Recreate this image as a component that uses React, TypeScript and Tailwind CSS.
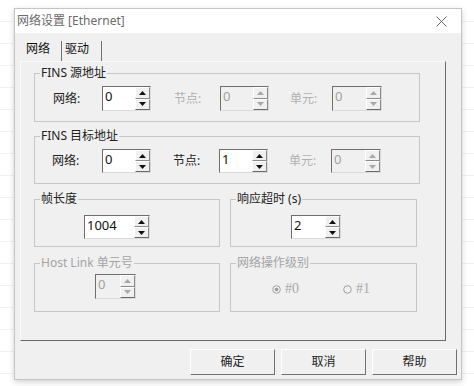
import React from "react";

const FONT = "font-['Noto_Sans','Noto_Sans_CJK_SC',sans-serif]";

interface SpinProps {
  value: string;
  w: string;
  h?: string;
  disabled?: boolean;
}

const Arrow: React.FC<{ up?: boolean; disabled?: boolean }> = ({ up, disabled }) => (
  <svg width="7" height="4" viewBox="0 0 7 4">
    <path
      d={up ? "M0 4 L3.5 0 L7 4 Z" : "M0 0 L3.5 4 L7 0 Z"}
      fill={disabled ? "#a8a8a8" : "#111"}
    />
  </svg>
);

const Spin: React.FC<SpinProps> = ({ value, w, h = "h-[25px]", disabled }) => (
  <div
    className={`flex ${w} ${h} border border-t-[#6e6e6e] border-l-[#6e6e6e] border-r-[#dadada] border-b-[#dadada]`}
  >
    <div
      className={`flex-1 pl-[2px] pt-[1px] text-[13px] leading-[16px] ${
        disabled ? "bg-[#f0f0f0] text-[#a0a0a0]" : "bg-white text-[#111]"
      }`}
    >
      {value}
    </div>
    <div className="flex w-[15px] flex-col bg-[#f0f0f0]">
      <div className="flex flex-1 items-center justify-center border border-t-white border-l-white border-r-[#8a8a8a] border-b-[#8a8a8a]">
        <Arrow up disabled={disabled} />
      </div>
      <div className="flex flex-1 items-center justify-center border border-t-white border-l-white border-r-[#8a8a8a] border-b-[#6a6a6a]">
        <Arrow disabled={disabled} />
      </div>
    </div>
  </div>
);

const Legend: React.FC<{ text: string; disabled?: boolean }> = ({ text, disabled }) => (
  <div
    className={`-mt-[9px] ml-[5px] w-fit bg-[#f0f0f0] px-[1px] text-[12px] leading-[16px] ${
      disabled ? "text-[#a4a4a4]" : "text-[#222]"
    }`}
  >
    {text}
  </div>
);

const Label: React.FC<{ text: string; w: string; ml?: string; disabled?: boolean }> = ({
  text,
  w,
  ml = "",
  disabled,
}) => (
  <div
    className={`${w} ${ml} text-[12px] leading-[16px] ${
      disabled ? "text-[#b0b0b0]" : "text-[#222]"
    }`}
  >
    {text}
  </div>
);

const Radio: React.FC<{ checked?: boolean; text: string }> = ({ checked, text }) => (
  <div className="flex items-center gap-[4px] text-[14px] leading-[16px] text-[#a8a8a8]">
    <svg width="9" height="9" viewBox="0 0 9 9">
      <circle cx="4.5" cy="4.5" r="3.8" fill="none" stroke="#a0a0a0" strokeWidth="1" />
      {checked && <circle cx="4.5" cy="4.5" r="1.8" fill="#9a9a9a" />}
    </svg>
    <span className="font-['Liberation_Serif',serif]">{text}</span>
  </div>
);

const Btn: React.FC<{ text: string }> = ({ text }) => (
  <div className="flex h-[26px] w-[85px] items-center justify-center border border-t-white border-l-white border-r-[#707070] border-b-[#707070] bg-[#f0f0f0] text-[12px] text-[#222]">
    {text}
  </div>
);

export default function App() {
  return (
    <div
      className={`h-[386px] w-[474px] overflow-hidden bg-white bg-[repeating-linear-gradient(to_bottom,#ffffff_0px,#ffffff_21px,#f1f1f1_21px,#f1f1f1_22px)] pl-[14px] pt-[8px] ${FONT}`}
    >
      <div className="flex h-[372px] w-[448px] flex-col border border-[#c4c4c4] bg-[#f0f0f0] shadow-[0_2px_6px_rgba(0,0,0,0.18)]">
        {/* title bar */}
        <div className="flex h-[24px] items-center justify-between bg-white pl-[2px] pr-[14px]">
          <span className="text-[12px] text-[#6a6a6a]">网络设置 [Ethernet]</span>
          <svg width="11" height="11" viewBox="0 0 11 11">
            <path d="M0.5 0.5 L10.5 10.5 M10.5 0.5 L0.5 10.5" stroke="#666" strokeWidth="1" />
          </svg>
        </div>

        {/* tabs */}
        <div className="mt-[8px] flex h-[20px] pl-[7px]">
          <div className="w-[40px] border-r border-[#707070] pl-[4px] text-[12px] leading-[16px] text-[#111]">
            网络
          </div>
          <div className="w-[40px] border-r border-[#707070] pl-[3px] text-[12px] leading-[16px] text-[#111]">
            驱动
          </div>
        </div>

        {/* tab panel */}
        <div className="ml-[5px] flex h-[280px] w-[426px] flex-col border border-t-[#fafafa] border-l-[#fafafa] border-r-[#6a6a6a] border-b-[#6a6a6a] pl-[13px]">
          <div className="mt-[11px] flex h-[49px] w-[386px] flex-col border border-[#c6c6c6]">
            <Legend text="FINS 源地址" />
            <div className="mt-[5px] flex items-center pl-[18px]">
              <Label text="网络:" w="w-[49px]" />
              <Spin value="0" w="w-[49px]" />
              <Label text="节点:" w="w-[46px]" ml="ml-[23px]" disabled />
              <Spin value="0" w="w-[49px]" disabled />
              <Label text="单元:" w="w-[42px]" ml="ml-[21px]" disabled />
              <Spin value="0" w="w-[50px]" disabled />
            </div>
          </div>

          <div className="mt-[14px] flex h-[48px] w-[386px] flex-col border border-[#c6c6c6]">
            <Legend text="FINS 目标地址" />
            <div className="mt-[5px] flex items-center pl-[17px]">
              <Label text="网络:" w="w-[50px]" />
              <Spin value="0" w="w-[49px]" h="h-[24px]" />
              <Label text="节点:" w="w-[46px]" ml="ml-[22px]" />
              <Spin value="1" w="w-[49px]" h="h-[24px]" />
              <Label text="单元:" w="w-[42px]" ml="ml-[21px]" disabled />
              <Spin value="0" w="w-[50px]" h="h-[24px]" disabled />
            </div>
          </div>

          <div className="mt-[15px] flex gap-[10px]">
            <div className="flex h-[48px] w-[186px] flex-col border border-[#c6c6c6]">
              <Legend text="帧长度" />
              <div className="mt-[8px] pl-[49px]">
                <Spin value="1004" w="w-[66px]" h="h-[24px]" />
              </div>
            </div>
            <div className="flex h-[48px] w-[187px] flex-col border border-[#c6c6c6]">
              <Legend text="响应超时 (s)" />
              <div className="mt-[8px] pl-[60px]">
                <Spin value="2" w="w-[50px]" h="h-[24px]" />
              </div>
            </div>
          </div>

          <div className="mt-[16px] flex gap-[10px]">
            <div className="flex h-[49px] w-[186px] flex-col border border-[#c6c6c6]">
              <Legend text="Host Link 单元号" disabled />
              <div className="mt-[3px] pl-[60px]">
                <Spin value="0" w="w-[41px]" disabled />
              </div>
            </div>
            <div className="flex h-[49px] w-[187px] flex-col border border-[#c6c6c6]">
              <Legend text="网络操作级别" disabled />
              <div className="mt-[10px] flex items-center pl-[41px]">
                <Radio checked text="#0" />
                <div className="ml-[44px]">
                  <Radio text="#1" />
                </div>
              </div>
            </div>
          </div>
        </div>

        {/* buttons */}
        <div className="mt-[8px] flex justify-end gap-[6px] pr-[4px]">
          <Btn text="确定" />
          <Btn text="取消" />
          <Btn text="帮助" />
        </div>
      </div>
    </div>
  );
}
